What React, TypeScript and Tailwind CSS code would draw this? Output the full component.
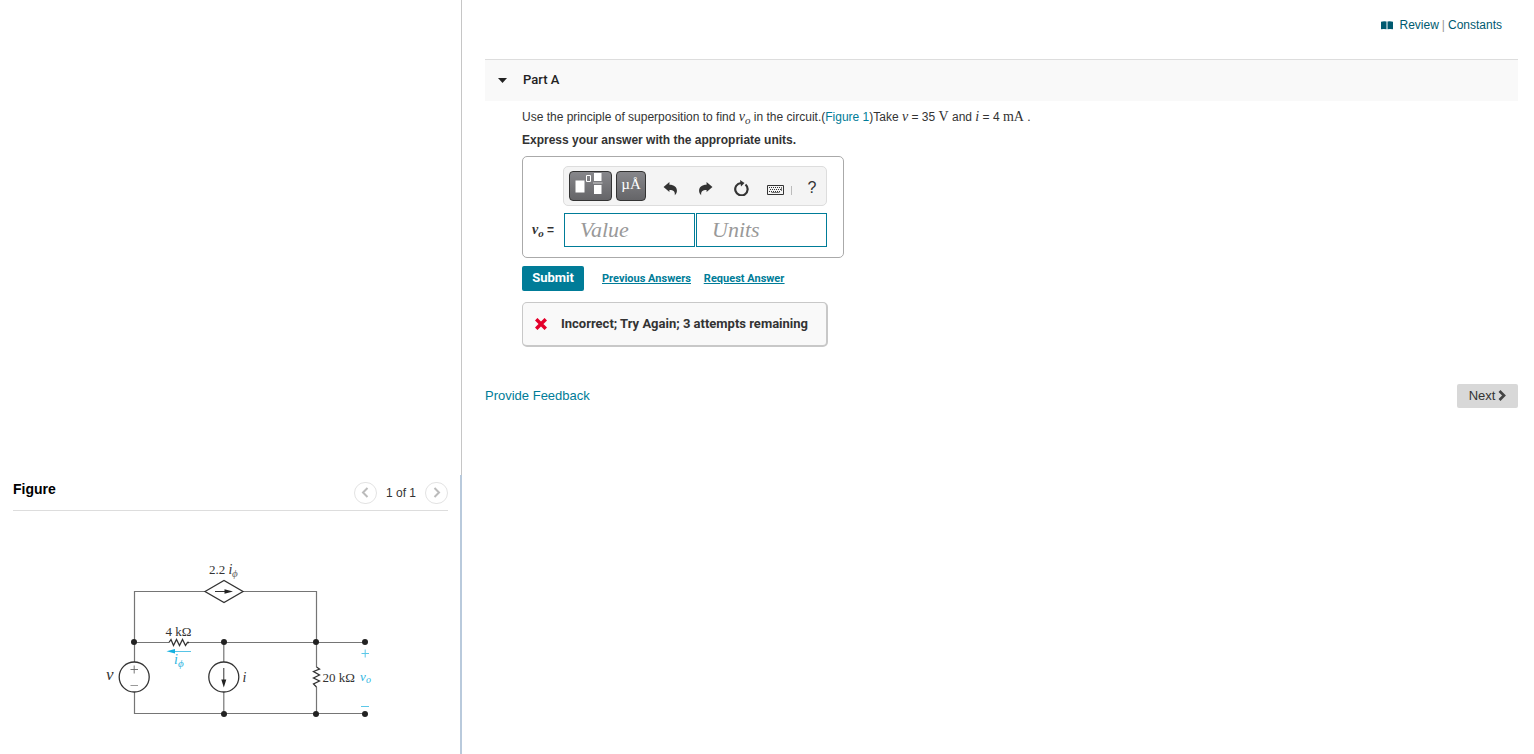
import type { ReactNode } from "react";

const serif = "font-['Liberation_Serif',serif]";
const strong = "font-['Roboto',sans-serif] font-bold";

function Circuit() {
  const dots = [[134, 642], [224, 642], [316, 642], [365, 642], [224, 714], [316, 714], [365, 714]];
  return (
    <svg
      role="img"
      aria-label="Circuit diagram"
      viewBox="88 550 300 180"
      className="block h-[180px] w-[300px] font-['Liberation_Serif',serif]"
      fill="none"
    >
      <g stroke="#757575" strokeWidth="1.2">
        <path d="M205 591.5H134.5V662M134.5 692V713.5H365M243 591.5H316.5V667M316.5 687V713.5" />
        <path d="M134.5 642.5H169M189 642.5H365M223.8 642V662M223.8 692V714" />
      </g>
      <g stroke="#333" strokeWidth="1.3">
        <path d="M205 591.5L224 580.5L243 591.5L224 602.5Z" />
        <circle cx="134.2" cy="677" r="15" />
        <circle cx="223.8" cy="677" r="15" />
        <path d="M169 642.5L171 639.5L173.5 645.5L176.5 639.5L179.5 645.5L182.5 639.5L185.5 645.5L187.5 642.5H189" />
        <path d="M316.5 667L319.5 669L313.5 671.5L319.5 675L313.5 678L319.5 681L313.5 684L316.5 687" />
      </g>
      <g stroke="#333" strokeWidth="1">
        <path d="M215 591.5H226M223.8 668V682" />
        <path d="M130.500 669.500H138M134.200 665.500V673.500" stroke="#666" strokeWidth="0.9" />
        <path d="M130.500 685.500H138" stroke="#999" />
      </g>
      <path d="M224.500 589.200L233 591.500L224.500 593.800ZM221.300 679.500H226.300L223.800 687.500Z" fill="#222" />
      {dots.map(([x, y]) => (
        <circle key={`${x}-${y}`} cx={x} cy={y} r="3" fill="#222" />
      ))}
      <path d="M174 651.500H191" stroke="#58c4e6" />
      <path d="M166.500 651.200L175 649V653.500Z" fill="#14b0e0" />
      <g stroke="#5cc8e8">
        <path d="M361.500 653.500H369M365.200 649.500V657.500M361 706.500H369" />
      </g>
      <g fill="#333" fontSize="13">
        <text x="209" y="574">2.2 <tspan fontStyle="italic" fontSize="14">i</tspan></text>
        <text x="232" y="577" fontSize="11" fontStyle="italic" fill="#666">ϕ</text>
        <text x="165.500" y="636">4 kΩ</text>
        <text x="322.500" y="682">20 kΩ</text>
        <text x="106" y="680" fontSize="17" fontStyle="italic">v</text>
        <text x="242.500" y="682" fontSize="14" fontStyle="italic">i</text>
      </g>
      <g fill="#2fb6df" fontStyle="italic">
        <text x="174" y="664" fontSize="14">i</text>
        <text x="178" y="667" fontSize="11">ϕ</text>
        <text x="360" y="681" fontSize="13">v</text>
        <text x="366" y="683" fontSize="10">o</text>
      </g>
    </svg>
  );
}

function Vo() {
  return (
    <span className={`${serif} text-[14px] italic leading-none`}>
      v<sub className="bottom-[-3px] text-[11px]">o</sub>
    </span>
  );
}

function Tool({ label, children }: { label: string; children: ReactNode }) {
  return (
    <button type="button" aria-label={label} className="flex h-5 w-[35px] items-center justify-center text-[#333]">
      {children}
    </button>
  );
}

function Toolbar() {
  return (
    <div className="flex h-10 items-center rounded-[5px] border border-[#ddd] bg-[#f4f4f4] pl-[5px]">
      <button
        type="button"
        aria-label="Templates"
        className="mr-1 h-[30px] w-[43px] rounded-[4px] border border-[#333] bg-linear-to-b from-[#87878b] to-[#656568]"
      >
        <svg viewBox="0 0 41 28" className="block h-7 w-[41px]">
          <path d="M5.500 8.500h9v12h-9zM24 1h7.500v8H24zM24 13h7.500v9H24z" fill="#fff" />
          <path d="M16.500 3.500h4v6h-4z" fill="none" stroke="#fff" />
          <path d="M23 11h9.500" stroke="#ccc" />
        </svg>
      </button>
      <button
        type="button"
        aria-label="Units and symbols"
        className={`${serif} mr-[7px] h-[30px] w-[30px] rounded-[4px] border border-[#333] bg-linear-to-b from-[#87878b] to-[#656568] pb-1 text-[15px] leading-none text-white`}
      >
        µÅ
      </button>
      <Tool label="Undo">
        <svg viewBox="0 0 14 14" className="h-[15px] w-[15px] translate-y-[2px]" fill="currentColor">
          <path d="M.5 5.500L6 1v2.500c4.500 0 7 2.400 7 5.500 0 1.800-.8 3.200-2 4.200.4-3.200-1-4.900-5-4.900V10.200z" />
        </svg>
      </Tool>
      <Tool label="Redo">
        <svg viewBox="0 0 14 14" className="h-[15px] w-[15px] translate-y-[2px]" fill="currentColor">
          <path d="M13.500 5.500L8 1v2.500C3.500 3.500 1 5.900 1 9c0 1.800.8 3.200 2 4.200-.4-3.200 1-4.900 5-4.900V10.200z" />
        </svg>
      </Tool>
      <Tool label="Reset">
        <svg viewBox="0 0 16 16" className="h-4 w-4 translate-y-[2px]" fill="none">
          <path d="M8 3A6.200 6.200 0 1 0 12.500 4.500" stroke="currentColor" strokeWidth="2.200" />
          <path d="M7 0L11.500 3L8 6.500Z" fill="currentColor" />
        </svg>
      </Tool>
      <Tool label="Keyboard">
        <svg viewBox="0 0 17 11" className="h-[11px] w-[17px] translate-y-1" fill="none" stroke="currentColor">
          <path d="M.5.5h16v9H.5z" strokeWidth="1" />
          <path d="M2 2.500h13M3 4.500h11M2 6.500h12" strokeDasharray="1 1" />
          <path d="M4.500 7.500h8M14.500 2v4" stroke="#777" />
        </svg>
      </Tool>
      <span className="mt-2 -ml-[2px] h-[9px] w-px bg-[#bbb]" />
      <button type="button" aria-label="Help" className="mt-1 ml-[15px] w-[10px] text-[16px] leading-5 text-[#333]">
        ?
      </button>
    </div>
  );
}

const field = `${serif} h-[34px] w-[131px] border border-[#007c98] bg-white pl-[15px] text-[22px] italic leading-7 text-[#333] outline-none placeholder:text-[#999]`;

function Chevron({ back = false }: { back?: boolean }) {
  return (
    <svg viewBox="0 0 8 12" className="h-[12px] w-2" fill="none" stroke="#bbb" strokeWidth="2">
      <path d={back ? "M6.500 1L2 5.500L6.500 10" : "M1.500 1L6 5.500L1.500 10"} />
    </svg>
  );
}

const round = "flex h-[22px] w-[23px] items-center justify-center rounded-full border border-[#e3e3e3] bg-white";

export default function App() {
  return (
    <div className="flex min-h-screen bg-white font-['Liberation_Sans',Arial,sans-serif] text-[12px] text-[#333]">
      <aside className="flex w-[462px] shrink-0 flex-col">
        <div className="flex-1 border-r border-[#c6c6c6]" />
        <section className="h-[279px] border-r-2 border-[#b9cadc] pl-[13px]">
          <div className="mr-3 flex h-9 justify-between border-b border-[#ddd]">
            <h2 className="pt-1 text-[14px] font-bold leading-5 text-black">Figure</h2>
            <div className="flex items-center gap-[9px]">
              <button type="button" aria-label="Previous figure" className={round}>
                <Chevron back />
              </button>
              <span className="leading-4">1 of 1</span>
              <button type="button" aria-label="Next figure" className={round}>
                <Chevron />
              </button>
            </div>
          </div>
          <div className="pt-[39px] pl-[75px]">
            <Circuit />
          </div>
        </section>
      </aside>

      <main className="flex-1 pr-4 pl-[23px]">
        <nav className="flex h-[59px] items-start justify-end gap-[3px] pt-[17px] pr-4 leading-4 text-[#005a70]">
          <a href="#review" className="flex items-center gap-[6px]">
            <svg viewBox="0 0 12 9" className="h-[9px] w-3" fill="#005a70">
              <path d="M0 .8Q3-.3 5.500.6V8.300Q3 7.500 0 8.300zM6.500.6Q9-.3 12 .8V8.300Q9 7.500 6.500 8.300z" />
            </svg>
            Review
          </a>
          <span className="text-[#999]">|</span>
          <a href="#constants">Constants</a>
        </nav>

        <h2 className="h-[42px] border-t border-[#ddd] bg-[#f9f9f9] pt-[10px] pl-[13px] font-['Roboto',sans-serif] text-[13px] font-medium leading-5 text-[#222]">
          <button type="button" aria-expanded="true" className="flex items-center gap-4">
            <svg viewBox="0 0 9 5" className="h-[5px] w-[9px]" fill="#222">
              <path d="M0 0h9L4.500 5z" />
            </svg>
            Part A
          </button>
        </h2>

        <section className="pl-[37px]">
          <p className="pt-[6px] leading-5">
            Use the principle of superposition to find <Vo /> in the circuit.(
            <a href="#figure" className="text-[#007c98]">Figure 1</a>)Take{" "}
            <i className={`${serif} text-[14px] leading-none`}>v</i> = 35{" "}
            <span className={`${serif} text-[14px] leading-none`}>V</span> and{" "}
            <i className={`${serif} text-[14px] leading-none`}>i</i> = 4{" "}
            <span className={`${serif} text-[14px] leading-none`}>mA</span> .
          </p>
          <p className="pt-[5px] font-bold leading-4">Express your answer with the appropriate units.</p>

          <form onSubmit={(e) => e.preventDefault()}>
            <div className="mt-2 flex h-[102px] w-[322px] rounded-[5px] border border-[#aaa] pt-[9px] pr-4 pl-[9px]">
              <label htmlFor="value" className="w-[31px] shrink-0 pt-[54px] font-bold leading-5">
                <Vo /> =
              </label>
              <div className="flex-1">
                <Toolbar />
                <div className="mt-[7px] flex justify-between pl-px">
                  <input id="value" placeholder="Value" className={field} />
                  <input aria-label="Units" placeholder="Units" className={field} />
                </div>
              </div>
            </div>
            <div className="mt-2 flex items-center">
              <button
                type="submit"
                className={`${strong} mr-[18px] h-[25px] w-[62px] rounded-[2px] bg-[#007c98] pb-[2px] text-[13px] text-white`}
              >
                Submit
              </button>
              <div className={`${strong} flex gap-[13px] pt-px text-[11px] text-[#007c98] underline`}>
                <a href="#previous">Previous Answers</a>
                <a href="#request">Request Answer</a>
              </div>
            </div>
          </form>

          <div
            role="status"
            className={`${strong} mt-[11px] flex h-[45px] w-[306px] items-center rounded-[5px] border border-r-2 border-b-2 border-[#c8c8c8] bg-[#f9f9f9] pl-3 text-[13px]`}
          >
            <svg viewBox="0 0 12 12" className="mr-[14px] h-3 w-3" fill="none" stroke="#e4002b" strokeWidth="3.500">
              <path d="M1.200 1.200L10.800 10.800M10.800 1.200L1.200 10.800" />
            </svg>
            Incorrect; Try Again; 3 attempts remaining
          </div>
        </section>

        <footer className="mt-[37px] flex items-center justify-between text-[13px]">
          <a href="#feedback" className="text-[#007c98]">Provide Feedback</a>
          <button type="button" className="flex h-6 w-[61px] items-center justify-center gap-[3px] rounded-[2px] bg-[#d8d8d8]">
            Next
            <svg viewBox="0 0 8 12" className="h-3 w-2" fill="none" stroke="#444" strokeWidth="2.700">
              <path d="M1.500 1L6 5.500L1.500 10" />
            </svg>
          </button>
        </footer>
      </main>
    </div>
  );
}
